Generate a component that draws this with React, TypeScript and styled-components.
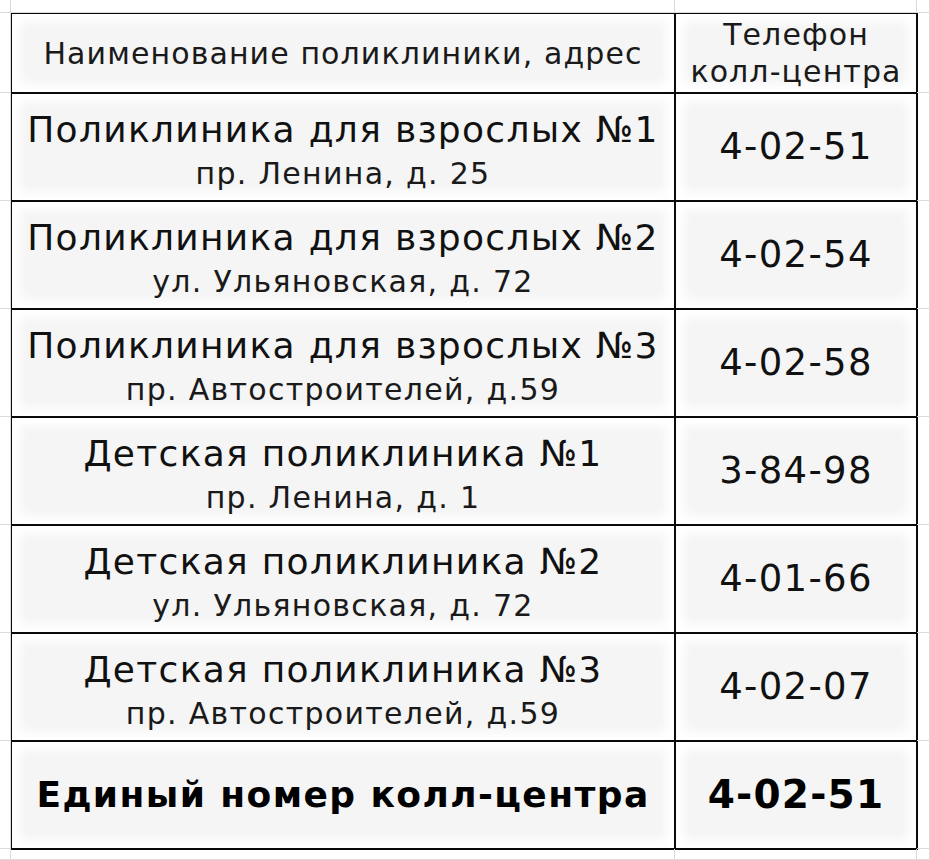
import { Fragment } from "react";
import styled, { createGlobalStyle } from "styled-components";

const GlobalStyle = createGlobalStyle`
  html, body {
    margin: 0;
    padding: 0;
    background: #ffffff;
  }
  body {
    font-family: "DejaVu Sans", Verdana, sans-serif;
    color: #111111;
  }
`;

const clinics = [
  { name: "Поликлиника для взрослых №1", address: "пр. Ленина, д. 25", phone: "4-02-51" },
  { name: "Поликлиника для взрослых №2", address: "ул. Ульяновская, д. 72", phone: "4-02-54" },
  { name: "Поликлиника для взрослых №3", address: "пр. Автостроителей, д.59", phone: "4-02-58" },
  { name: "Детская поликлиника №1", address: "пр. Ленина, д. 1", phone: "3-84-98" },
  { name: "Детская поликлиника №2", address: "ул. Ульяновская, д. 72", phone: "4-01-66" },
  { name: "Детская поликлиника №3", address: "пр. Автостроителей, д.59", phone: "4-02-07" },
];

// spreadsheet grid: gutters around the bordered table
const Sheet = styled.div`
  width: 930px;
  height: 860px;
  overflow: hidden;
  display: grid;
  grid-template-columns: 11px 664px 242px 1fr;
  grid-template-rows: 13px 80px repeat(7, 108px) 1fr;
`;

const GutterCell = styled.div`
  box-sizing: border-box;
  border-right: 1px solid #dadada;
  border-bottom: 1px solid #dadada;
`;

const Table = styled.div`
  grid-column: 2 / 4;
  grid-row: 2 / 10;
  margin: -1px;
  padding: 2px;
  background: #0a0a0a;
  display: grid;
  grid-template-columns: 662px 240px;
  grid-template-rows: 78px repeat(7, 106px);
  gap: 2px;
`;

const Cell = styled.div<{ $top?: number }>`
  box-sizing: border-box;
  padding-top: ${(p) => p.$top ?? 0}px;
  background: #f5f5f5;
  box-shadow: inset 0 0 10px 8px #ffffff;
  display: flex;
  flex-direction: column;
  align-items: center;
  justify-content: center;
  text-align: center;
  white-space: nowrap;
`;

const HeadText = styled.div`
  font-size: 30px;
  line-height: 37px;
  letter-spacing: 1.1px;
  color: #1a1a1a;
`;

const Name = styled.div`
  font-size: 36px;
  line-height: 42px;
  letter-spacing: 1.3px;
`;

const Address = styled.div`
  margin-top: 5px;
  font-size: 30px;
  line-height: 36px;
  letter-spacing: 1.3px;
  color: #1a1a1a;
`;

const Phone = styled.div`
  font-size: 37px;
  line-height: 42px;
  letter-spacing: 1.3px;
`;

const Total = styled.div`
  font-size: 36px;
  line-height: 42px;
  font-weight: 700;
  letter-spacing: 1.4px;
  color: #000000;
`;

const TotalPhone = styled.div`
  font-size: 39px;
  line-height: 42px;
  font-weight: 700;
  letter-spacing: 1.2px;
  color: #000000;
`;

export default function App() {
  return (
    <>
      <GlobalStyle />
      <Sheet>
        <Table>
          <Cell>
            <HeadText>Наименование поликлиники, адрес</HeadText>
          </Cell>
          <Cell>
            <HeadText>Телефон</HeadText>
            <HeadText>колл-центра</HeadText>
          </Cell>
          {clinics.map((c) => (
            <Fragment key={c.name}>
              <Cell $top={6}>
                <Name>{c.name}</Name>
                <Address>{c.address}</Address>
              </Cell>
              <Cell>
                <Phone>{c.phone}</Phone>
              </Cell>
            </Fragment>
          ))}
          <Cell>
            <Total>Единый номер колл-центра</Total>
          </Cell>
          <Cell>
            <TotalPhone>4-02-51</TotalPhone>
          </Cell>
        </Table>
        {Array.from({ length: 24 }).map((_, i) => (
          <GutterCell key={i} />
        ))}
      </Sheet>
    </>
  );
}
